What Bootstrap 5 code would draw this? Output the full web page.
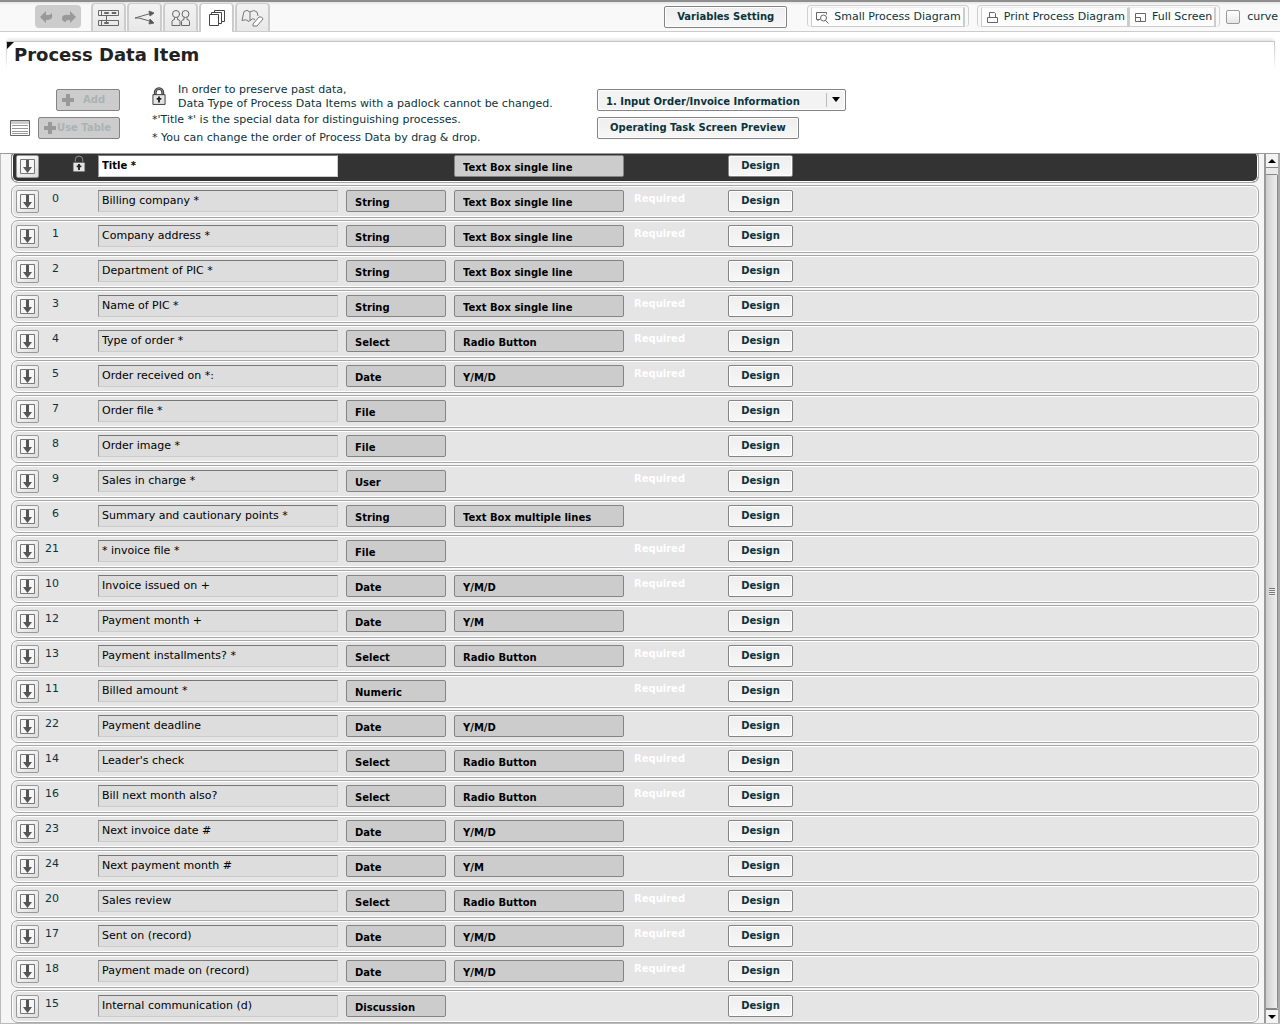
<!DOCTYPE html>
<html lang="en">
<head>
<meta charset="utf-8">
<meta name="viewport" content="width=device-width, initial-scale=1">
<title>Process Data Item</title>
<link rel="stylesheet" href="https://cdn.jsdelivr.net/npm/bootstrap@5.3.0/dist/css/bootstrap.min.css">
<style>
body{font-family:"DejaVu Sans",Verdana,sans-serif;font-size:11px;line-height:14px;color:#0b333c;background:#fff}
button,input,select{font-family:inherit}
.topbar{height:32px;border-top:2px solid #8e8e8e;border-bottom:1px solid #ccc;background:linear-gradient(#e4e4e4,#f9f9f9 3px);padding-left:35px;padding-right:2px}
.history{height:23px;width:46px;margin-top:3px;margin-right:10px;background:#ccc;border-radius:4px}
.history button{width:23px;height:23px;padding:0;border:0;background:none;line-height:0}
.tab-btn{width:35px;height:28px;margin-top:1px;margin-right:1px;padding:0;border:1px solid #ccc;border-width:1px 2px 0 2px;border-radius:4px 4px 0 0;background:linear-gradient(#f2f2f2,#e8e8e8);line-height:0}
.tab-btn.active{height:29px;background:#fff}
.flex-btn{height:22px;border:1px solid #848484;border-radius:2px;padding:0 12px;font-size:10px;font-weight:700;line-height:20px;color:#0b333c;background:linear-gradient(#eee,#f7f7f7);box-shadow:inset 0 0 0 1px #fff;white-space:nowrap}
.flex-btn:disabled{background:#ccc;color:#aab3b3;box-shadow:none}
.tool-group{height:22px;margin-top:3px;padding:1px 3px 1px 3px;border:1px solid #d0d0d0;border-width:1px 1px 0 1px;border-radius:4px}
.tool-btn{height:20px;border:1px solid #ccc;border-top-color:#eee;border-right-width:2px;background:#fdfdfd;color:#0b333c;font-size:11px;line-height:18px;padding:0 2px 0 4px;white-space:nowrap}
.tool-btn svg{margin-right:5px}
.curve-item{margin:8px 0 0 6px}
.curve-box{appearance:none;width:14px;height:14px;border:1px solid #999;border-radius:2px;background:linear-gradient(#fff,#e6e6e6);margin:0 7px 0 0}
.panel-top{margin:0 5px 0 6px;padding-top:9px}
.panel-edge{height:28px;border:1px solid #ccc;border-bottom:0;border-image:linear-gradient(#c4c4c4,#fff) 1;box-shadow:0 -3px 3px -1px #e2e2e2;padding-left:7px;position:relative}
.panel-edge::before{content:"";position:absolute;left:0;top:0;border-top:7px solid #111;border-right:7px solid transparent}
h1{font-size:18px;font-weight:700;line-height:26px;color:#222;margin:0}
.head-area{height:84px;padding:14px 0 0 10px}
.add-col{width:110px;padding-top:6px;row-gap:6px}
.add-btn{width:64px}
.note-col{width:445px;margin-left:32px}
.note-line{line-height:18px}
.task-col{padding-top:6px}
.task-select{appearance:none;width:249px;padding:2px 8px 0;background:#f3f3f3}
.select-wrap{position:relative;width:249px;height:28px}
.select-wrap svg{position:absolute;right:4px;top:3px;pointer-events:none}
.list-box{border-top:1px solid #999;border-left:1px solid #bbb;border-bottom:1px solid #bbb;background:#f5f5f5;min-height:0}
.rows-view{min-width:0;overflow:hidden;padding:0 5px 0 10px}
.rows-inner{margin-top:-4px}
.item-row{height:33px;margin-bottom:2px;border:1px solid #a6a6a6;border-radius:7px;padding:4px;background:#e5e5e5;box-shadow:inset 0 0 0 1px #fff}
.item-row.title-row{background:#333;border-left-color:#888}
.move-btn{width:23px;height:23px;padding:0;border:1px solid #999;border-radius:2px;background:linear-gradient(135deg,#fff,#ddd);line-height:0}
.idx{width:20px;text-align:right;line-height:18px}
.lock-cell{width:39px;padding-left:13px;line-height:0}
.name-input{width:240px;height:22px;margin-right:8px;padding:0 3px 1px;border:1px solid #ccc;border-top-color:#777;border-left-color:#999;border-radius:0;background:#ddd;color:#000;font-size:11px;line-height:19px}
.title-row .name-input{background:#fff;font-size:10px;font-weight:700}
.type-select{appearance:none;height:22px;border:1px solid #848484;border-radius:2px;background:#ccc;color:#000;opacity:1;font-size:10px;font-weight:700;padding:3px 8px 0;line-height:17px}
.type-a{width:100px;margin-right:8px}
.type-b{width:170px;margin-right:10px}
.req{width:94px;color:#fff;font-size:10px;font-weight:700;line-height:18px}
.design-btn{width:65px;padding:0}
.scroll-col{width:16px;border-left:2px solid #999;border-right:2px solid #aaa;background:#e9e9e9}
.scroll-col button{height:14px;width:12px;padding:0;border:0;border-bottom:1px solid #888;background:#f3f3f3;line-height:0}
.scroll-col button:last-child{border-bottom:0;border-top:1px solid #888}
.thumb{margin-top:6px;border:1px solid #888;border-left:0;border-radius:0 2px 2px 0;background:linear-gradient(90deg,#cfcfcf,#eee)}
.grip{width:6px;height:8px;background:repeating-linear-gradient(#777 0 1px,#eee 1px 2px)}
svg{flex:none}
</style>
<script src="https://cdn.jsdelivr.net/npm/bootstrap@5.3.0/dist/js/bootstrap.bundle.min.js"></script>
</head>
<body class="d-flex flex-column vh-100 overflow-hidden">
<svg width="0" height="0" class="position-absolute" aria-hidden="true">
  <symbol id="lock" viewBox="0 0 15 19"><path d="M3.500 8V5a4 4 0 0 1 8 0v3" fill="none" stroke="#333" stroke-width="3"/><path d="M3.500 8V5a4 4 0 0 1 8 0v3" fill="none" stroke="#999" stroke-width="1"/><path d="M1 7.500h13v10.500H1z" fill="#e4e4e4" stroke="#333"/><path d="M5 11h5v2H8.500v3h-2v-3H5zM6.500 9.500h2V11h-2z" fill="#222"/></symbol>
  <symbol id="down" viewBox="0 0 21 21"><path d="M3.500 3.500h14v14h-14z" fill="#f6f6f6" stroke="#777"/><path d="M9 4h3v7h3l-4.500 6L6 11h3z" fill="#555"/></symbol>
  <symbol id="plus" viewBox="0 0 14 14"><path d="M5 1h4v4h4v4H9v4H5V9H1V5h4z" fill="#999"/></symbol>
</svg>

<header class="topbar d-flex align-items-start">
  <div class="history d-flex">
    <button type="button" aria-label="Undo"><svg width="23" height="23"><path d="M5 12l6-6v4h3q3-1 2-3 4 8-5 8v3z" fill="#999"/></svg></button>
    <button type="button" aria-label="Redo"><svg width="23" height="23"><path d="M18 12l-6-6v4Q4 9 4 13q0 4 4 4-1-2 4-2v3z" fill="#999"/></svg></button>
  </div>
  <button type="button" class="tab-btn" aria-label="Flow"><svg width="22" height="18" fill="none" stroke="#666"><path d="M.5 1.500h20v5H.5zM.5 11.500h20v5H.5zM3.500 1v6M3.500 11v6M8.500 6v7"/><path d="M6.500 3.500h4v1h-4zM14 3.500h4v1h-4zM6.500 13.500h4v1h-4z"/></svg></button>
  <button type="button" class="tab-btn" aria-label="Routes"><svg width="22" height="18" fill="none" stroke="#666"><path d="M1 9l17-5M1 9h4l14 4"/><path d="M15 2l5 2-4 3zM16 10l4 4-5 1z" fill="#555"/></svg></button>
  <button type="button" class="tab-btn" aria-label="Members"><svg width="20" height="18" fill="none" stroke="#666"><circle cx="5" cy="5" r="3.500"/><circle cx="14.500" cy="5" r="3.500"/><path d="M3.500 8.500v2q-2 0-2.500 2v4h8v-4q-.5-2-2.500-2v-2M13 8.500v2q-2 0-2.500 2v4h8v-4q-.5-2-2.500-2v-2"/></svg></button>
  <button type="button" class="tab-btn active" aria-label="Process data"><svg width="18" height="18" fill="#fff" stroke="#444"><path d="M6.500 1.500h10v11h-10z"/><path d="M3.500 3.500h10v11h-10z"/><path d="M1.500 5.500h9v11h-9z"/></svg></button>
  <button type="button" class="tab-btn" aria-label="Manual"><svg width="23" height="20" fill="none" stroke="#777"><path d="M9 4Q6 1 3 3.500L1 12.500q4-2 7 1l1-1q3-3 5-1M9 4v9M9 4q4-3 7 0l1 4"/><path d="M12 16l6-7q3-1 4 2l-6 7h-4z" fill="#fff"/></svg></button>

  <div class="d-flex align-items-start ms-auto">
    <button type="button" class="flex-btn mt-1 me-3">Variables Setting</button>
    <div class="tool-group d-flex ms-1">
      <button type="button" class="tool-btn d-flex align-items-center"><svg width="13" height="13" fill="none" stroke="#666"><path d="M4 8.500H.5V1.500h10v2M2 8v2"/><circle cx="7.500" cy="7" r="3"/><path d="M9.500 9.500l3 3"/></svg>Small Process Diagram</button>
    </div>
    <div class="tool-group d-flex ms-2">
      <button type="button" class="tool-btn d-flex align-items-center"><svg width="13" height="13" fill="none" stroke="#666"><path d="M3.500 6V1.500h5l1 1V6M1.500 6.500h10v5h-10zM3.500 6.500h6"/></svg>Print Process Diagram</button>
      <button type="button" class="tool-btn d-flex align-items-center"><svg width="13" height="13" fill="none" stroke="#666"><path d="M1.500 2.500h10v8h-10zM1.500 6.500h5v4"/></svg>Full Screen</button>
    </div>
    <div class="curve-item d-flex align-items-center">
      <input type="checkbox" class="curve-box" id="curve"><label for="curve">curve</label>
    </div>
  </div>
</header>

<div class="panel-top"><div class="panel-edge"><h1>Process Data Item</h1></div></div>

<section class="head-area d-flex align-items-start flex-shrink-0">
  <div class="add-col d-flex flex-column align-items-end">
    <button type="button" disabled class="flex-btn add-btn d-flex align-items-center px-1"><svg width="14" height="14" class="me-2"><use href="#plus"/></svg>Add</button>
    <div class="d-flex align-items-center justify-content-between w-100">
      <svg width="20" height="17" fill="none" stroke="#888"><path d="M.5.5h19v15H.5z" fill="#fff" stroke="#666"/><path d="M1 2.500h18" stroke="#ccc" stroke-width="3"/><path d="M2 5.500h16M2 8.500h16M2 11.500h16M2 13.500h16" stroke="#999"/></svg>
      <button type="button" disabled class="flex-btn d-flex align-items-center ps-1 pe-2"><svg width="14" height="14"><use href="#plus"/></svg>Use Table</button>
    </div>
  </div>
  <div class="note-col">
    <div class="d-flex align-items-start">
      <svg width="14" height="19" class="mt-1 me-2"><use href="#lock"/></svg>
      <div class="ms-1">In order to preserve past data,<br>Data Type of Process Data Items with a padlock cannot be changed.</div>
    </div>
    <div class="note-line">*'Title *' is the special data for distinguishing processes.</div>
    <div class="note-line">* You can change the order of Process Data by drag &amp; drop.</div>
  </div>
  <div class="task-col">
    <div class="select-wrap">
      <select class="flex-btn task-select" aria-label="Operating task"><option>1. Input Order/Invoice Information</option></select>
      <svg width="16" height="16"><path d="M.5 1v14" stroke="#bbb"/><path d="M6 5h8l-4 5z" fill="#000"/></svg>
    </div>
    <button type="button" class="flex-btn">Operating Task Screen Preview</button>
  </div>
</section>

<main class="list-box d-flex flex-fill">
  <div class="rows-view flex-fill"><div class="rows-inner" id="rows"></div></div>
  <div class="scroll-col d-flex flex-column">
    <button type="button" aria-label="Scroll up"><svg width="12" height="12"><path d="M2 8h8L6 4z" fill="#000"/></svg></button>
    <div class="thumb flex-fill d-flex align-items-center justify-content-center"><div class="grip"></div></div>
    <button type="button" aria-label="Scroll down"><svg width="12" height="12"><path d="M2 4h8L6 8z" fill="#000"/></svg></button>
  </div>
</main>

<script>
const S = 'Text Box single line', R = 'Radio Button', D = 'Y/M/D';
// number, name, data type, input style, required
const items = [
  ['', 'Title *', '', S, 0],
  [0, 'Billing company *', 'String', S, 1],
  [1, 'Company address *', 'String', S, 1],
  [2, 'Department of PIC *', 'String', S, 0],
  [3, 'Name of PIC *', 'String', S, 1],
  [4, 'Type of order *', 'Select', R, 1],
  [5, 'Order received on *:', 'Date', D, 1],
  [7, 'Order file *', 'File', '', 0],
  [8, 'Order image *', 'File', '', 0],
  [9, 'Sales in charge *', 'User', '', 1],
  [6, 'Summary and cautionary points *', 'String', 'Text Box multiple lines', 0],
  [21, '* invoice file *', 'File', '', 1],
  [10, 'Invoice issued on +', 'Date', D, 1],
  [12, 'Payment month +', 'Date', 'Y/M', 0],
  [13, 'Payment installments? *', 'Select', R, 1],
  [11, 'Billed amount *', 'Numeric', '', 1],
  [22, 'Payment deadline', 'Date', D, 0],
  [14, "Leader's check", 'Select', R, 1],
  [16, 'Bill next month also?', 'Select', R, 1],
  [23, 'Next invoice date #', 'Date', D, 0],
  [24, 'Next payment month #', 'Date', 'Y/M', 0],
  [20, 'Sales review', 'Select', R, 1],
  [17, 'Sent on (record)', 'Date', D, 1],
  [18, 'Payment made on (record)', 'Date', D, 1],
  [15, 'Internal communication (d)', 'Discussion', '', 0]
];
const pick = (v, cls, label) => v
  ? `<select disabled class="type-select ${cls}" aria-label="${label}"><option>${v}</option></select>`
  : `<div class="${cls}"></div>`;
document.getElementById('rows').innerHTML = items.map(([n, name, type, style, req], i) => `
<div class="item-row d-flex align-items-start ${i ? '' : 'title-row'}">
  <button type="button" class="move-btn" aria-label="Move down"><svg width="21" height="21"><use href="#down"/></svg></button>
  <div class="idx">${n}</div>
  <div class="lock-cell">${i ? '' : '<svg width="14" height="18"><use href="#lock"/></svg>'}</div>
  <input type="text" class="name-input" aria-label="Item name" value="${name}">
  ${pick(type, 'type-a', 'Data type')}${pick(style, 'type-b', 'Input style')}
  <div class="req">${req ? 'Required' : ''}</div>
  <button type="button" class="flex-btn design-btn">Design</button>
</div>`).join('');
</script>
</body>
</html>
